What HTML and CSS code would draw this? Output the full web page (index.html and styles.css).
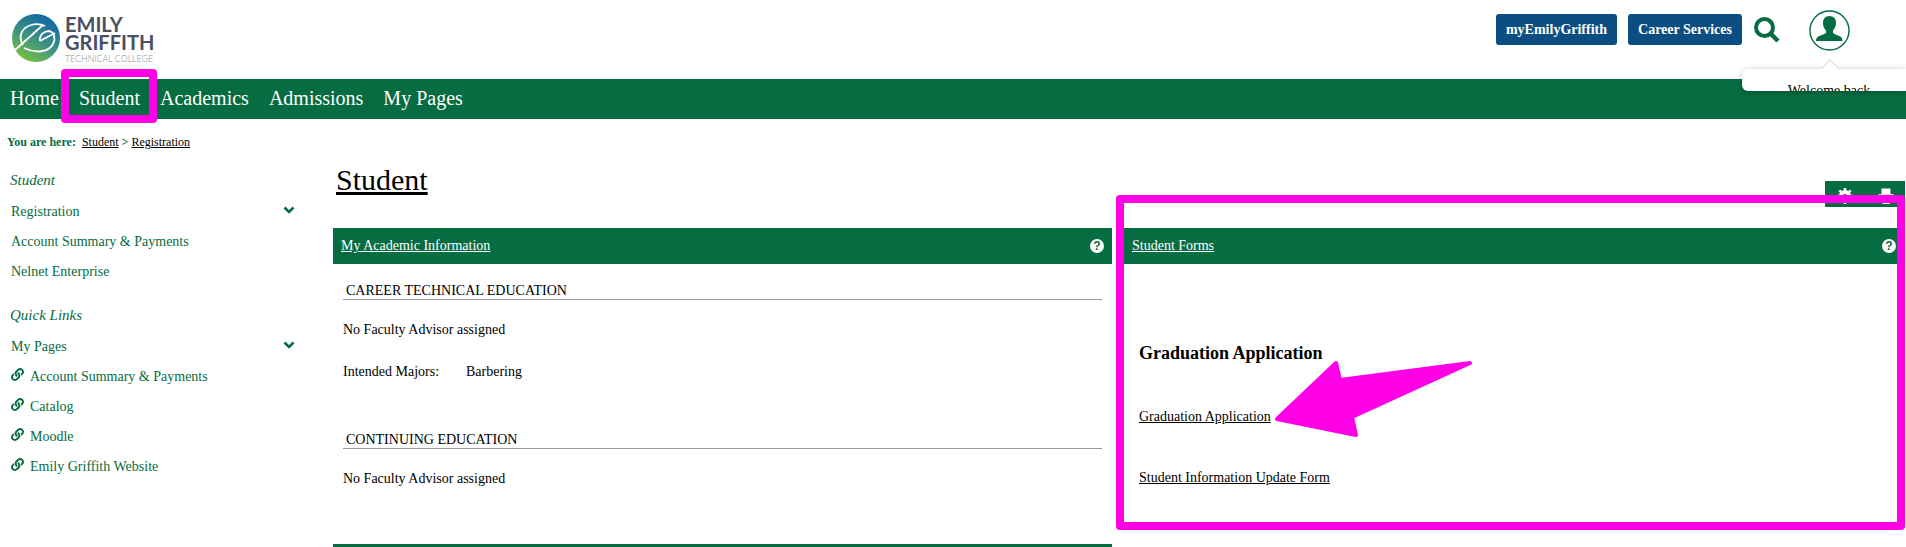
FILE: index.html
```html
<!DOCTYPE html>
<html lang="en">
<head>
<meta charset="utf-8">
<title>Student</title>
<link rel="stylesheet" href="styles.css">
</head>
<body>
<header class="top">
  <a class="logo" href="#">
    <svg class="logo-mark" viewBox="0 0 48 48" aria-hidden="true">
      <defs>
        <linearGradient id="lg" x1="0.75" y1="0.05" x2="0.25" y2="0.95">
          <stop offset="0" stop-color="#0e66a4"/>
          <stop offset="0.55" stop-color="#3f9481"/>
          <stop offset="1" stop-color="#74c043"/>
        </linearGradient>
      </defs>
      <circle cx="24" cy="24" r="24" fill="url(#lg)"/>
      <g fill="none" stroke="#fff" stroke-width="1.8">
        <path d="M3 36 L31 11"/>
        <path d="M11 31 C6 23 9 14 19 11 C24 9.500 29 10 33 12"/>
        <path d="M28 27 L43 19"/>
        <path d="M28 27 C27 20 33 17 37 17 C42 18 44 24 41 30 C37 38 24 40 12 34"/>
      </g>
    </svg>
    <span class="logo-text">
      <span class="logo-name">EMILY</span>
      <span class="logo-name">GRIFFITH</span>
      <span class="logo-sub">TECHNICAL COLLEGE</span>
    </span>
  </a>
  <div class="top-actions">
    <a class="btn" href="#">myEmilyGriffith</a>
    <a class="btn" href="#">Career Services</a>
    <svg class="search" viewBox="0 0 26 26" aria-hidden="true">
      <circle cx="10.500" cy="10.500" r="8.500" fill="none" stroke="#066c41" stroke-width="4"/>
      <path d="M16.500 16.500 L24 24" stroke="#066c41" stroke-width="4.500" fill="none"/>
    </svg>
    <svg class="user" viewBox="0 0 41 41" aria-hidden="true">
      <circle cx="20.500" cy="20.500" r="19.500" fill="none" stroke="#066c41" stroke-width="1.400"/>
      <path d="M20.500 6 C25 6 27 9 27 13 C27 16.500 25.500 19 24 20.500 L24 23 C27 25.500 33.500 25.500 33.500 30.500 L33.500 31 L7 31 L7 30.500 C7 25.500 14 25.500 17 23 L17 20.500 C15.500 19 14 16.500 14 13 C14 9 16 6 20.500 6 Z" fill="#066c41"/>
    </svg>
  </div>
</header>

<div class="popover">
  <div class="popover-clip">Welcome back</div>
</div>
<div class="popover-tip"></div>

<nav class="nav">
  <a href="#">Home</a>
  <a href="#">Student</a>
  <a href="#">Academics</a>
  <a href="#">Admissions</a>
  <a href="#">My Pages</a>
</nav>

<div class="crumbs"><b class="crumbs-label">You are here:</b><a href="#">Student</a> <b>&gt;</b> <a href="#">Registration</a></div>

<div class="layout">
  <aside class="side">
    <div class="side-title">Student</div>
    <a class="side-row" href="#"><span>Registration</span><svg class="chev" viewBox="0 0 12 8" aria-hidden="true"><path d="M1.500 1.500 L6 6 L10.500 1.500" fill="none" stroke="#066c41" stroke-width="2.600"/></svg></a>
    <a class="side-row" href="#">Account Summary &amp; Payments</a>
    <a class="side-row" href="#">Nelnet Enterprise</a>

    <div class="side-title side-gap">Quick Links</div>
    <a class="side-row" href="#"><span>My Pages</span><svg class="chev" viewBox="0 0 12 8" aria-hidden="true"><path d="M1.500 1.500 L6 6 L10.500 1.500" fill="none" stroke="#066c41" stroke-width="2.600"/></svg></a>
    <a class="side-row side-link" href="#"><svg class="link-ico" aria-hidden="true"><use href="#link"/></svg>Account Summary &amp; Payments</a>
    <a class="side-row side-link" href="#"><svg class="link-ico" aria-hidden="true"><use href="#link"/></svg>Catalog</a>
    <a class="side-row side-link" href="#"><svg class="link-ico" aria-hidden="true"><use href="#link"/></svg>Moodle</a>
    <a class="side-row side-link" href="#"><svg class="link-ico" aria-hidden="true"><use href="#link"/></svg>Emily Griffith Website</a>
  </aside>

  <main class="main">
    <div class="title-row">
      <h1 class="title">Student</h1>
      <div class="tools">
        <svg class="tool" viewBox="0 0 16 16" aria-hidden="true">
          <circle cx="8" cy="8" r="4.500" fill="none" stroke="#fff" stroke-width="3"/>
          <path d="M8 0 V16 M0 8 H16 M2.300 2.300 L13.700 13.700 M13.700 2.300 L2.300 13.700" stroke="#fff" stroke-width="2.600"/>
          <circle cx="8" cy="8" r="2" fill="#066c41"/>
        </svg>
        <svg class="tool" viewBox="0 0 16 16" aria-hidden="true">
          <path d="M3.500 0.500 H12.500 V6 H3.500 Z" fill="#fff"/>
          <path d="M0.500 6 H15.500 V12 H12.500 V9.500 H3.500 V12 H0.500 Z" fill="#cfe0d8"/>
          <path d="M4.500 11 H11.500 V16 H4.500 Z" fill="#fff"/>
        </svg>
      </div>
    </div>

    <div class="cols">
      <div class="col">
        <section class="panel">
          <div class="panel-head"><a href="#">My Academic Information</a><span class="help">?</span></div>
          <div class="acad">
            <h2 class="sub">CAREER TECHNICAL EDUCATION</h2>
            <p class="line line-first">No Faculty Advisor assigned</p>
            <p class="line line-major"><span class="major-label">Intended Majors:</span>Barbering</p>
            <h2 class="sub sub-second">CONTINUING EDUCATION</h2>
            <p class="line line-first2">No Faculty Advisor assigned</p>
          </div>
        </section>
        <div class="next-panel"></div>
      </div>
      <section class="panel">
        <div class="panel-head"><a href="#">Student Forms</a><span class="help">?</span></div>
        <div class="forms">
          <h3 class="forms-title">Graduation Application</h3>
          <a class="form-link" href="#">Graduation Application</a>
          <a class="form-link form-link-2" href="#">Student Information Update Form</a>
        </div>
      </section>
    </div>
  </main>
</div>

<div class="mark mark-nav"></div>
<div class="mark mark-forms"></div>
<svg class="arrow" viewBox="0 0 1906 547" aria-hidden="true">
  <polygon points="1277,419 1336,363 1340,380 1470,363 1352,417 1356,435" fill="#ff00e6" stroke="#ff00e6" stroke-width="4" stroke-linejoin="round"/>
</svg>

<svg class="defs" aria-hidden="true">
  <symbol id="link" viewBox="0 0 512 512">
    <path fill="#066c41" d="M326.612 185.391c59.747 59.809 58.927 155.698.36 214.59-.11.12-.24.25-.36.37l-67.2 67.2c-59.27 59.27-155.699 59.262-214.96 0-59.27-59.26-59.27-155.7 0-214.96l37.106-37.106c9.84-9.84 26.786-3.3 27.294 10.606.648 17.722 3.826 35.527 9.69 52.721 1.986 5.822.567 12.262-3.783 16.612l-13.087 13.087c-28.026 28.026-28.905 73.66-1.155 101.96 28.024 28.579 74.086 28.749 102.325.51l67.2-67.19c28.191-28.191 28.073-73.757 0-101.83-3.701-3.694-7.429-6.564-10.341-8.569a16.037 16.037 0 0 1-6.947-12.606c-.396-10.567 3.348-21.456 11.698-29.806l21.054-21.055c5.521-5.521 14.182-6.199 20.584-1.731a152.482 152.482 0 0 1 20.522 17.197zM467.547 44.449c-59.261-59.262-155.69-59.27-214.96 0l-67.2 67.2c-.12.12-.25.25-.36.37-58.566 58.892-59.387 154.781.36 214.59a152.454 152.454 0 0 0 20.521 17.196c6.402 4.468 15.064 3.789 20.584-1.731l21.054-21.055c8.35-8.35 12.094-19.239 11.698-29.806a16.037 16.037 0 0 0-6.947-12.606c-2.912-2.005-6.64-4.875-10.341-8.569-28.073-28.073-28.191-73.639 0-101.83l67.2-67.19c28.239-28.239 74.3-28.069 102.325.51 27.75 28.3 26.872 73.934-1.155 101.96l-13.087 13.087c-4.35 4.35-5.769 10.79-3.783 16.612 5.864 17.194 9.042 34.999 9.69 52.721.509 13.906 17.454 20.446 27.294 10.606l37.106-37.106c59.271-59.259 59.271-155.699.001-214.959z"/>
  </symbol>
</svg>
</body>
</html>
```

FILE: styles.css
```css
* { box-sizing: border-box; }
html, body { margin: 0; height: 547px; overflow: hidden; }
body {
  position: relative;
  background: #fff;
  color: #000;
  font: 14px/20px "Liberation Serif", "Times New Roman", serif;
}
a { color: inherit; }

/* Header */
.top {
  display: flex;
  justify-content: space-between;
  height: 79px;
}
.logo {
  display: flex;
  gap: 5px;
  padding: 14px 0 0 12px;
  text-decoration: none;
}
.logo-mark { width: 48px; height: 48px; }
.logo-text {
  display: flex;
  flex-direction: column;
  padding-top: 1px;
  color: #4a4f61;
  font-family: "Lato", "Liberation Sans", sans-serif;
}
.logo-name {
  font-size: 20px;
  font-weight: 700;
  line-height: 18px;
}
.logo-sub {
  font-size: 8.800px;
  line-height: 11px;
  margin-top: 2px;
  color: #8b8e98;
  font-weight: 300;
  white-space: nowrap;
}
.top-actions {
  display: flex;
  align-items: flex-start;
  padding: 14px 56px 0 0;
}
.btn {
  display: block;
  height: 31px;
  padding: 0 10px;
  margin-right: 11px;
  background: #0c4d82;
  border-radius: 3px;
  color: #fff;
  font-weight: 700;
  font-size: 14px;
  line-height: 32px;
  text-decoration: none;
  white-space: nowrap;
}
.search { width: 26px; height: 26px; margin: 3px 0 0 1px; }
.user { width: 41px; height: 41px; margin: -4px 0 0 29px; }

/* Popover cut off by the reference's crop */
.popover {
  position: absolute;
  z-index: 2;
  left: 1742px;
  top: 69px;
  width: 164px;
  height: 22px;
  background: #fff;
  border-radius: 6px 0 0 6px;
  box-shadow: 0 1px 6px rgba(0, 0, 0, .25);
  overflow: hidden;
}
.popover-clip {
  padding: 12px 0 0 10px;
  line-height: 20px;
  text-align: center;
  font-size: 14px;
}
.popover-tip {
  position: absolute;
  z-index: 3;
  left: 1823px;
  top: 62px;
  width: 14px;
  height: 14px;
  background: #fff;
  border-left: 1px solid #ddd;
  border-top: 1px solid #ddd;
  transform: rotate(45deg);
}

/* Nav */
.nav {
  display: flex;
  gap: 20px;
  height: 40px;
  padding-left: 10px;
  background: #066c41;
  font-size: 20px;
  line-height: 39px;
}
.nav a { color: #fff; text-decoration: none; white-space: nowrap; }

/* Breadcrumb */
.crumbs {
  height: 46px;
  padding: 14px 0 0 7px;
  font-size: 12px;
  line-height: 18px;
  white-space: nowrap;
}
.crumbs b { color: #066c41; }
.crumbs-label { margin-right: 6px; }

/* Layout */
.layout { display: flex; }
.side { width: 333px; flex: none; color: #066c41; }
.side-title {
  height: 31px;
  padding-left: 10px;
  font-size: 15px;
  font-style: italic;
  line-height: 30px;
}
.side-gap { margin-top: 14px; }
.side-row {
  display: flex;
  align-items: center;
  height: 30px;
  padding: 2px 38px 0 11px;
  text-decoration: none;
  font-size: 14px;
  white-space: nowrap;
}
.side-row > span { flex: 1; }
.chev { width: 12px; height: 8px; margin-top: -4px; }
.link-ico { width: 13px; height: 13px; margin: -5px 6px 0 0; flex: none; }
.defs { position: absolute; width: 0; height: 0; }

/* Main */
.main { flex: 1; min-width: 0; }
.title-row {
  display: flex;
  justify-content: space-between;
  height: 63px;
}
.title {
  margin: 0 0 0 3px;
  font-size: 30px;
  font-weight: 400;
  line-height: 30px;
  text-decoration: underline;
}
.tools {
  display: flex;
  justify-content: space-between;
  width: 80px;
  height: 26px;
  margin: 16px 1px 0 0;
  padding: 7px 11px 0 12px;
  background: #066c41;
}
.tool { width: 16px; height: 16px; }
.cols {
  display: grid;
  grid-template-columns: 779px 780px;
  column-gap: 12px;
}
.panel-head {
  display: flex;
  align-items: center;
  justify-content: space-between;
  height: 36px;
  padding: 0 8px;
  background: #066c41;
  color: #fff;
}
.help {
  width: 14px;
  height: 14px;
  border-radius: 50%;
  background: #fff;
  color: #066c41;
  font: 700 12px/14px "Liberation Sans", Arial, sans-serif;
  text-align: center;
}
.acad { padding: 0 10px; }
.sub {
  height: 19px;
  margin: 17px 0 0;
  padding-left: 3px;
  border-bottom: 1px solid #999;
  font-size: 14px;
  font-weight: 400;
  line-height: 20px;
}
.sub-second { margin-top: 48px; }
.line { margin: 0; line-height: 20px; }
.line-first { margin-top: 20px; }
.line-major { margin-top: 22px; }
.line-first2 { margin-top: 20px; }
.major-label { display: inline-block; width: 123px; }
.next-panel {
  height: 3px;
  margin-top: 55px;
  background: #066c41;
}
.forms { padding: 77px 0 0 15px; }
.forms-title {
  margin: 0;
  font-size: 18px;
  line-height: 24px;
}
.form-link { display: block; width: fit-content; margin-top: 42px; line-height: 20px; }
.form-link-2 { margin-top: 41px; }

/* Annotations on top of the page */
.mark {
  position: absolute;
  z-index: 5;
  border: 8px solid #ff00e6;
  border-radius: 4px;
  pointer-events: none;
}
.mark-nav { left: 61px; top: 69px; width: 96px; height: 54px; }
.mark-forms { left: 1116px; top: 195px; width: 789px; height: 335px; }
.arrow {
  position: absolute;
  z-index: 6;
  left: 0;
  top: 0;
  width: 1906px;
  height: 547px;
  pointer-events: none;
}
```
